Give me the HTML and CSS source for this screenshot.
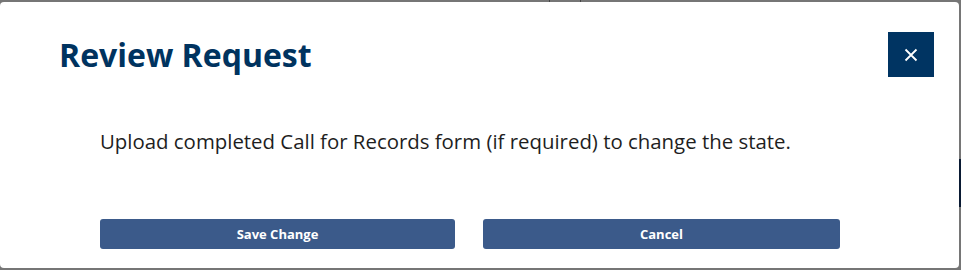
FILE: index.html
```html
<!DOCTYPE html>
<html>
<head>
<meta charset="utf-8">
<link rel="stylesheet" href="styles.css">
</head>
<body>
<div class="backdrop">
  <div class="modal">
    <div class="modal-header">
      <h1 class="modal-title">Review Request</h1>
      <button class="close-btn" aria-label="Close">
        <svg width="14" height="14" viewBox="0 0 14 14"><path d="M1.5 1.5 L12.5 12.5 M12.5 1.5 L1.5 12.5" stroke="#fff" stroke-width="1.8" fill="none"/></svg>
      </button>
    </div>
    <div class="modal-body">
      <p class="message">Upload completed Call for Records form (if required) to change the state.</p>
      <div class="actions">
        <button class="action-btn">Save Change</button>
        <button class="action-btn">Cancel</button>
      </div>
    </div>
  </div>
</div>
</body>
</html>
```
FILE: styles.css
```css
html, body {
  margin: 0;
  padding: 0;
}
body {
  width: 961px;
  height: 270px;
  overflow: hidden;
  background: #767676;
  font-family: "Open Sans", "Noto Sans", sans-serif;
}
.backdrop {
  width: 961px;
  height: 270px;
  background:
    linear-gradient(#444, #444) 549px 0 / 1px 2px no-repeat,
    linear-gradient(#444, #444) 580px 0 / 1px 2px no-repeat,
    linear-gradient(#0a1a33, #0a1a33) 959px 159px / 2px 48px no-repeat,
    #767676;
  padding-top: 2px;
  box-sizing: border-box;
}
.modal {
  width: 959px;
  height: 266px;
  background: #fff;
  border-radius: 4px;
  box-sizing: border-box;
  padding: 30px 25px 0 59px;
}
.modal-header {
  display: flex;
  align-items: flex-start;
  justify-content: space-between;
  height: 45px;
}
.modal-title {
  margin: 0;
  font-size: 32px;
  line-height: 45px;
  font-weight: 700;
  color: #00335f;
}
.close-btn {
  width: 46px;
  height: 45px;
  border: 0;
  padding: 0;
  margin: 0;
  background: #003462;
  display: flex;
  align-items: center;
  justify-content: center;
  cursor: pointer;
}
.modal-body {
  padding-left: 41px;
}
.message {
  margin: 51px 0 0 0;
  font-size: 20.4px;
  line-height: 27px;
  color: #1e1e1e;
}
.actions {
  display: flex;
  gap: 28px;
  margin-top: 64px;
}
.action-btn {
  width: 355px;
  height: 30px;
  border: 0;
  border-radius: 3px;
  background: #3b5a8a;
  color: #fff;
  font-family: "Open Sans", "Noto Sans", sans-serif;
  font-weight: 700;
  font-size: 13px;
  padding: 0;
}
.action-btn + .action-btn {
  width: 357px;
}
```
